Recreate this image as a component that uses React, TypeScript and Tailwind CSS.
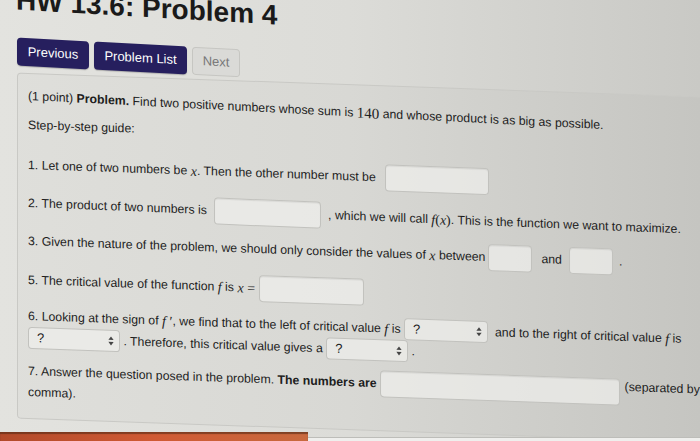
import React from "react";

const Inp = ({ w }: { w: string }) => (
  <span
    className={`inline-block h-[27px] ${w} shrink-0 rounded-[4px] border border-[#c2c2be] bg-[#efefec]/70 shadow-[inset_0_1px_1px_rgba(0,0,0,0.07)]`}
  />
);

const Arrows = () => (
  <svg width="6" height="10" viewBox="0 0 6 10" className="shrink-0">
    <path d="M3 0.5 L5.6 4 H0.4 Z" fill="#444" />
    <path d="M3 9.5 L5.6 6 H0.4 Z" fill="#444" />
  </svg>
);

const Sel = ({ w }: { w: string }) => (
  <span
    className={`inline-flex h-[22px] ${w} shrink-0 items-center justify-between rounded-[4px] border border-[#c2c2be] bg-[#efefec]/70 pl-[8px] pr-[5px] text-[13px]`}
  >
    <span>?</span>
    <Arrows />
  </span>
);

const M = ({ children }: { children: React.ReactNode }) => (
  <i className="font-['Liberation_Serif',serif] text-[14px]">{children}</i>
);

export default function App() {
  return (
    <div className="relative flex h-[441px] w-[700px] flex-col overflow-hidden bg-linear-to-r from-[#e3e3df] via-[#dcdcd8] to-[#c9c9c5] font-['Liberation_Sans',Arial,sans-serif] text-[#1d1d1d]">
      <div className="flex w-[780px] flex-1 origin-left skew-y-2 flex-col px-[17px]">
        <h1 className="-ml-[1px] mt-[-14px] origin-left skew-y-[1.3deg] text-[28px] font-bold leading-[28px] text-[#1a1a1a]">
          HW 13.6: Problem 4
        </h1>
        <div className="mt-[23px] flex origin-left skew-y-1 gap-[5px] text-[13px]">
          <span className="flex h-[28px] w-[72px] items-center justify-center rounded-[4px] bg-[#261f5e] text-white shadow-[0_1px_1px_rgba(0,0,0,0.2)]">
            Previous
          </span>
          <span className="flex h-[28px] w-[93px] items-center justify-center rounded-[4px] bg-[#261f5e] text-white shadow-[0_1px_1px_rgba(0,0,0,0.2)]">
            Problem List
          </span>
          <span className="flex h-[28px] w-[48px] items-center justify-center rounded-[4px] border border-[#c6c6c2] bg-[#dadad7] text-[#777]">
            Next
          </span>
        </div>
        <div className="mt-[7px] flex h-[346px] flex-col rounded-[4px] border border-[#c9c9c5] bg-black/[0.015] pl-[10px] pt-[12px] text-[12.3px] whitespace-pre">
          <div className="flex h-[20px] origin-left skew-y-[0.9deg] items-center">
            <span>(1 point) </span>
            <b>Problem.</b>
            <span> Find two positive numbers whose sum is </span>
            <span className="font-['Liberation_Serif',serif] text-[15px]">140</span>
            <span> and whose product is as big as possible.</span>
          </div>
          <div className="mt-[9px] flex h-[20px] items-center">Step-by-step guide:</div>
          <div className="mt-[16px] flex h-[28px] items-center">
            <span>1. Let one of two numbers be </span>
            <M>x</M>
            <span>. Then the other number must be </span>
            <span className="w-[6px]" />
            <Inp w="w-[104px]" />
          </div>
          <div className="mt-[10px] flex h-[28px] origin-left skew-y-[0.3deg] items-center">
            <span>2. The product of two numbers is </span>
            <span className="w-[4px]" />
            <Inp w="w-[107px]" />
            <span>  , which we will call </span>
            <M>f</M>
            <span className="font-['Liberation_Serif',serif] text-[14px]">(</span>
            <M>x</M>
            <span className="font-['Liberation_Serif',serif] text-[14px]">)</span>
            <span>. This is the function we want to maximize.</span>
          </div>
          <div className="mt-[10px] flex h-[28px] items-center">
            <span>3. Given the nature of the problem, we should only consider the values of </span>
            <M>x</M>
            <span> between</span>
            <span className="w-[3px]" />
            <Inp w="w-[44px]" />
            <span className="ml-[9px] mr-[7px]">and</span>
            <Inp w="w-[44px]" />
            <span className="ml-[6px]">.</span>
          </div>
          <div className="mt-[11px] flex h-[28px] items-center">
            <span>5. The critical value of the function </span>
            <M>f</M>
            <span> is </span>
            <M>x</M>
            <span className="font-['Liberation_Serif',serif] text-[14px]"> = </span>
            <Inp w="w-[105px]" />
          </div>
          <div className="mt-[11px] flex h-[22px] items-center">
            <span>6. Looking at the sign of </span>
            <M>f</M>
            <span className="font-['Liberation_Serif',serif] text-[14px]"> ′</span>
            <span>, we find that to the left of critical value </span>
            <M>f</M>
            <span> is </span>
            <Sel w="w-[84px]" />
            <span className="ml-[7px]">and to the right of critical value </span>
            <M>f</M>
            <span> is</span>
          </div>
          <div className="flex h-[22px] items-center">
            <Sel w="w-[92px]" />
            <span> . Therefore, this critical value gives a </span>
            <Sel w="w-[82px]" />
            <span> .</span>
          </div>
          <div className="mt-[8px] flex h-[28px] items-center">
            <span>7. Answer the question posed in the problem. </span>
            <b>The numbers are</b>
            <span className="w-[3px]" />
            <Inp w="w-[240px]" />
            <span className="mb-[10px] ml-[5px]">(separated by</span>
          </div>
          <div className="flex h-[14px] items-center">comma).</div>
        </div>
      </div>
      <div className="relative z-10 flex h-[9px] shrink-0">
        <div className="w-[308px] bg-linear-to-r from-[#b24a2a] via-[#d05a34] to-[#c8693e] shadow-[inset_0_2px_1px_rgba(80,40,20,0.6)]" />
        <div className="mt-[5px] flex-1 border-t border-[#bdbdb9] bg-[#efefed]" />
      </div>
    </div>
  );
}
